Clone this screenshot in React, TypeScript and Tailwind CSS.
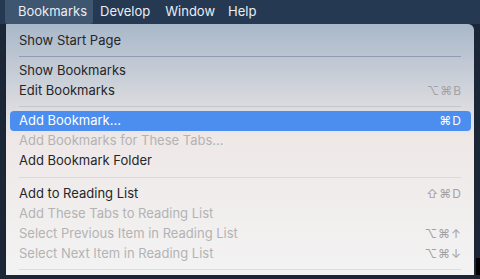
const items: (
  | { kind: 'sep'; h: string; line: string }
  | { kind: 'item'; label: string; keys?: string; disabled?: boolean; active?: boolean }
)[] = [
  { kind: 'item', label: 'Show Start Page' },
  { kind: 'sep', h: 'h-[10px]', line: 'bg-[#8e9dae]' },
  { kind: 'item', label: 'Show Bookmarks' },
  { kind: 'item', label: 'Edit Bookmarks', keys: '⌥⌘B' },
  { kind: 'sep', h: 'h-[10px]', line: 'bg-[#c3c6cc]' },
  { kind: 'item', label: 'Add Bookmark…', keys: '⌘D', active: true },
  { kind: 'item', label: 'Add Bookmarks for These Tabs…', disabled: true },
  { kind: 'item', label: 'Add Bookmark Folder' },
  { kind: 'sep', h: 'h-[13px]', line: 'bg-[#dad8d8]' },
  { kind: 'item', label: 'Add to Reading List', keys: '⇧⌘D' },
  { kind: 'item', label: 'Add These Tabs to Reading List', disabled: true },
  { kind: 'item', label: 'Select Previous Item in Reading List', keys: '⌥⌘↑', disabled: true },
  { kind: 'item', label: 'Select Next Item in Reading List', keys: '⌥⌘↓', disabled: true },
  { kind: 'sep', h: 'h-[11px]', line: 'bg-[#dcdcdc]' },
];

export default function App() {
  return (
    <div
      className="relative w-[480px] h-[279px] overflow-hidden bg-[#1b2636] flex flex-col"
      style={{ fontFamily: 'Inter, "Liberation Sans", "DejaVu Sans", sans-serif' }}
    >
      {/* menu bar */}
      <div className="h-6 shrink-0 bg-[#253a52] flex items-center text-[13px] text-[#e9edf2]">
        <div className="ml-[5px] h-6 w-[88px] bg-[#3e5670] rounded-b-[3px] flex items-center pl-[13px]">
          Bookmarks
        </div>
        <span className="ml-[7px]">Develop</span>
        <span className="ml-[15px]">Window</span>
        <span className="ml-[13px]">Help</span>
      </div>

      {/* dropdown */}
      <div className="ml-[5px] mr-[6px] h-[251px] shrink-0 rounded-tr-[6px] border-l border-[#1a2331] bg-gradient-to-b from-[#a8b8c9] via-[#eee8e7] via-45% to-[#f3f3f3] pt-[7px] text-[13px]">
        {items.map((it, i) =>
          it.kind === 'sep' ? (
            <div key={i} className={`${it.h} flex items-center px-[13px]`}>
              <div className={`h-px w-full ${it.line}`} />
            </div>
          ) : (
            <div
              key={i}
              className={`h-5 mx-[4px] mr-[3px] px-[9px] rounded-[4px] flex items-center justify-between ${
                it.active
                  ? 'bg-[#4b8ef0] text-white'
                  : it.disabled
                  ? 'text-[#b3b3b5]'
                  : 'text-[#252628]'
              }`}
            >
              <span>{it.label}</span>
              {it.keys && (
                <span
                  className={`text-[12px] tracking-[1px] ${
                    it.active ? 'text-white' : 'text-[#a2a2a5]'
                  }`}
                >
                  {it.keys}
                </span>
              )}
            </div>
          )
        )}
      </div>

      {/* cursor fragment */}
      <div className="absolute left-[476px] top-[258px] w-[4px] h-[17px] bg-black" />
    </div>
  );
}
